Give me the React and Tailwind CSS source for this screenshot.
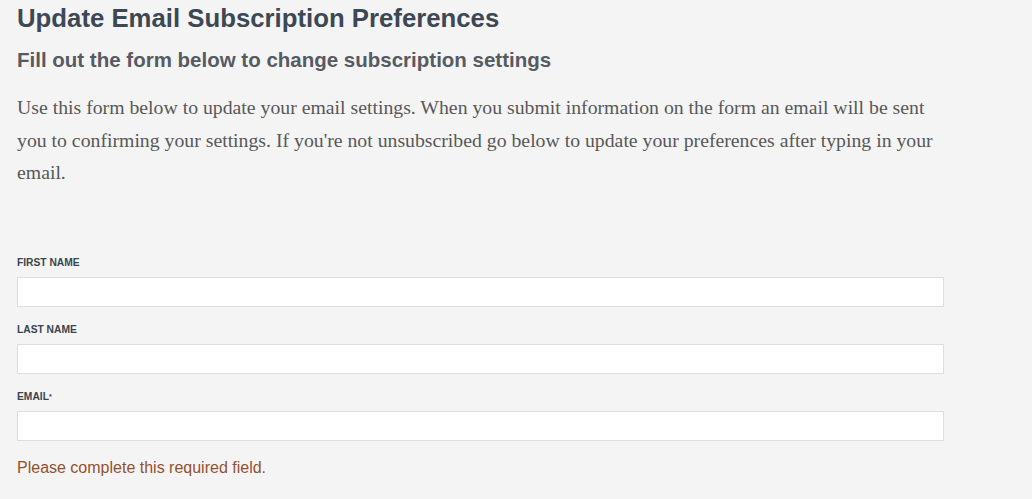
export default function App() {
  const fields = [
    { label: 'FIRST NAME', req: false, gap: '' },
    { label: 'LAST NAME', req: false, gap: 'mt-[16px]' },
    { label: 'EMAIL', req: true, gap: 'mt-[16px]' },
  ];

  return (
    <div className="min-h-[499px] w-full bg-[#f4f4f4] pl-[17px] pt-[3px]" style={{ fontFamily: '"Liberation Sans", Arial, sans-serif' }}>
      <h1 className="text-[25.75px] leading-[30px] font-bold text-[#3c4853]">Update Email Subscription Preferences</h1>
      <h2 className="mt-[15px] text-[20.5px] leading-[24px] font-bold text-[#565b63]">Fill out the form below to change subscription settings</h2>
      <p
        className="mt-[19px] text-[19.75px] leading-[32.5px] text-[#585858]"
        style={{ fontFamily: '"Liberation Serif", Georgia, serif' }}
      >
        Use this form below to update your email settings. When you submit information on the form an email will be sent
        <br />
        you to confirming your settings. If you're not unsubscribed go below to update your preferences after typing in your
        <br />
        email.
      </p>

      <form className="mt-[67px] w-[927px]">
        {fields.map((f) => (
          <div key={f.label} className={f.gap}>
            <label className="block text-[10.25px] leading-[14px] font-bold text-[#3a444e]">
              {f.label}
              {f.req && <span className="align-top text-[7px]">*</span>}
            </label>
            <input
              type="text"
              className="mt-[7px] block h-[30px] w-full border border-[#dedede] bg-white"
            />
          </div>
        ))}
        <p className="mt-[17px] text-[16px] leading-[20px] text-[#93512f]">Please complete this required field.</p>
      </form>
    </div>
  );
}
